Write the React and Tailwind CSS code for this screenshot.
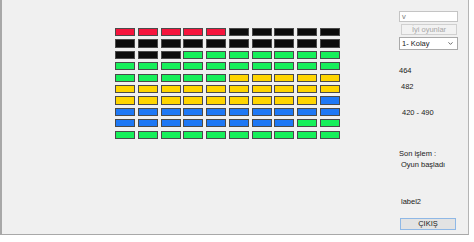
import { ChevronDown } from 'lucide-react'

const R = 'bg-[#f5143c]'
const K = 'bg-[#0c0c0c]'
const G = 'bg-[#16f05a]'
const Y = 'bg-[#ffd500]'
const B = 'bg-[#1e78f5]'

// brick layout, row by row
const rows = [
  [R, R, R, R, R, K, K, K, K, K],
  [K, K, K, K, K, K, K, K, K, K],
  [K, K, K, G, G, G, G, G, G, G],
  [G, G, G, G, G, G, G, G, G, G],
  [G, G, G, G, G, Y, Y, Y, Y, Y],
  [Y, Y, Y, Y, Y, Y, Y, Y, Y, Y],
  [Y, Y, Y, Y, Y, Y, Y, Y, Y, B],
  [B, B, B, B, B, B, B, B, B, B],
  [B, B, B, B, B, B, B, B, G, G],
  [G, G, G, G, G, G, G, G, G, G],
]

function Brick({ color }) {
  return <div className={`h-[8.3px] border border-[#4a4a4a] ${color}`} />
}

export default function App() {
  return (
    <div className="w-[474px] h-[242px] bg-white overflow-hidden" style={{ fontFamily: '"Liberation Sans", Arial, sans-serif' }}>
      <div className="w-[469px] h-[235px] bg-[#f0f0f0] border-l-2 border-r border-b border-[#a8a8a8] border-r-[#b4b4b4] flex">
        {/* game field */}
        <div className="w-[397px] pl-[113px] pt-[28px]">
          <div className="w-[225px] grid grid-cols-10 gap-x-[2.7px] gap-y-[3.1px]">
            {rows.map((row, i) =>
              row.map((c, j) => <Brick key={`${i}-${j}`} color={c} />)
            )}
          </div>
        </div>

        {/* side panel */}
        <div className="flex flex-col text-[7.5px] text-[#1a1a1a] pt-[11px]">
          <div className="w-[59px] h-[11px] bg-white border border-[#c4c4c4] text-[#7a7a7a] pl-[2px] leading-[9px]">v</div>
          <button disabled className="mt-[2px] ml-[2px] w-[56px] h-[11px] border border-[#d0d0d0] bg-[#f2f2f2] text-[#a6a6a6] leading-[9px]">İyi oyunlar</button>
          <div className="mt-[2px] w-[59px] h-[13px] bg-white border border-[#a9a9a9] flex items-center justify-between pl-[2px] pr-[3px]">
            <span>1- Kolay</span>
            <ChevronDown className="w-[7px] h-[7px] text-[#555]" strokeWidth={3} />
          </div>
          <span className="mt-[16px] leading-[9px]">464</span>
          <span className="mt-[7px] ml-[2px] leading-[9px]">482</span>
          <span className="mt-[17px] ml-[3px] leading-[9px]">420 - 490</span>
          <span className="mt-[32px] leading-[9px]">Son işlem :</span>
          <span className="mt-[2px] ml-[2px] leading-[9px]">Oyun başladı</span>
          <span className="mt-[28px] ml-[2px] leading-[9px]">label2</span>
          <button className="mt-[12px] ml-[1px] w-[56px] h-[12px] border border-[#8fb8e6] bg-[#e3e3e3] leading-[10px]">ÇIKIŞ</button>
        </div>
      </div>
    </div>
  )
}
